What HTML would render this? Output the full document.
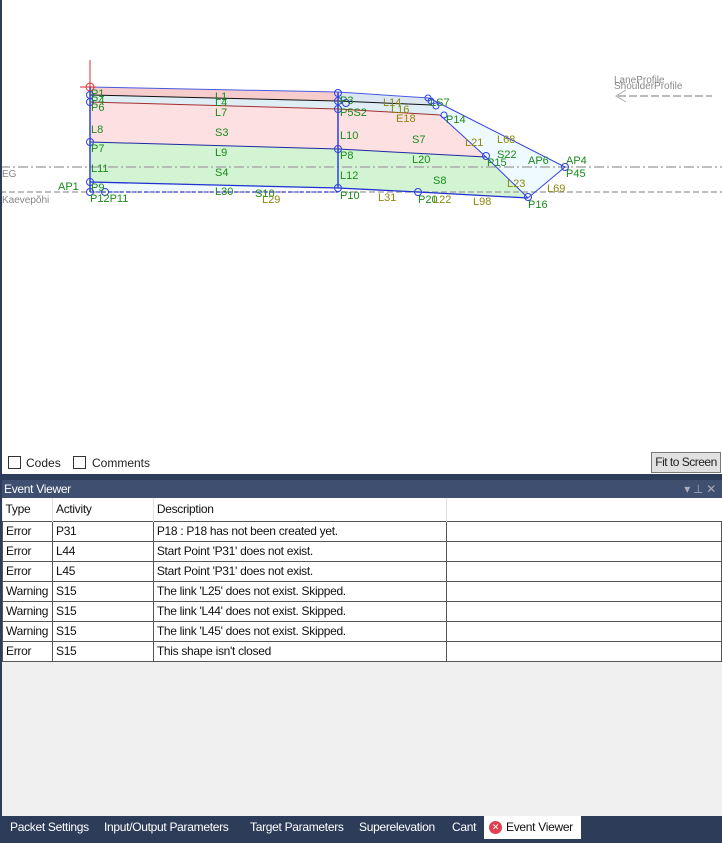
<!DOCTYPE html>
<html><head><meta charset="utf-8"><style>
*{margin:0;padding:0;box-sizing:border-box}
body{width:722px;height:843px;overflow:hidden;background:#2d3c58;font-family:"Liberation Sans",sans-serif;position:relative}
#canvas{position:absolute;left:2px;top:0;width:720px;height:452px;background:#fff}
#chk{position:absolute;left:2px;top:452px;width:720px;height:22px;background:#fff;font-size:12px;color:#222}
.cb{position:absolute;top:4px;width:13px;height:13px;border:1px solid #333;background:#fff}
#fit{position:absolute;right:1px;top:0px;width:70px;height:21px;border:1px solid #777;background:#e1e1e1;font-size:12px;line-height:19px;text-align:center;white-space:nowrap;letter-spacing:-0.5px;overflow:hidden}
#evh{position:absolute;left:2px;top:480px;width:720px;height:18px;background:#3e4f70;color:#fff;font-size:12px;line-height:18px;padding-left:2px;letter-spacing:-0.3px}
#tbl{position:absolute;left:2px;top:498px;width:720px;height:318px;background:#f0f0f0}
table{border-collapse:collapse;font-size:12px;color:#111;letter-spacing:-0.3px;table-layout:fixed}
td{height:20px;padding:0 3px;border:1px solid #555;background:#fff;white-space:nowrap;overflow:hidden}
tr.h td{border:none;border-right:1px solid #e0e0e0;background:#fff;height:23px}
#tabs{position:absolute;left:0;top:816px;width:722px;height:27px;font-size:12px;color:#fff;letter-spacing:-0.3px}
.t{position:absolute;top:4px}
</style></head><body>
<div id="canvas">
<svg width="720" height="452" viewBox="2 0 720 452" style="position:absolute;left:0;top:0">
<g font-family="Liberation Sans" font-size="11">
<polygon points="90,87 338,92 338,101 90,95" fill="#f6cccc"/>
<polygon points="338,92 429,98 432,105 338,101" fill="#dbe6f0"/>
<polygon points="90,95 338,101 432,105 440,115 338,109 90,102" fill="#dfeef4"/>
<polygon points="90,102 338,109 440,115 486,157 338,149 90,142" fill="#fde0e2"/>
<polygon points="90,142 338,149 486,157 528,198 418,192 338,188 90,182" fill="#d3f4d3"/>
<polygon points="429,98 440,115 486,157 528,198 565,167" fill="#eefafd"/>
<polygon points="90,182 338,188 90,192" fill="#eefafd"/>
<line x1="0" y1="167" x2="722" y2="167" stroke="#aaa" stroke-width="1.5" stroke-dasharray="10,3,2,3"/>
<line x1="0" y1="192" x2="722" y2="192" stroke="#aaa" stroke-width="1.5" stroke-dasharray="6,3"/>
<polyline points="90,87 338,92 429,98" fill="none" stroke="#4a5ae0"/>
<polyline points="90,95 338,101 432,105" fill="none" stroke="#111"/>
<polyline points="90,102 338,109 440,115" fill="none" stroke="#a03030"/>
<polyline points="90,142 338,149 486,157" fill="none" stroke="#1a2aa0"/>
<polyline points="90,182 338,188 418,192 528,198" fill="none" stroke="#2030d0" stroke-width="1.3"/>
<line x1="90" y1="192" x2="338" y2="192" stroke="#2030e0" stroke-dasharray="4,2"/>
<polyline points="440,115 486,157 528,198 565,167 429,98" fill="none" stroke="#3040e0"/>
<line x1="90" y1="86" x2="90" y2="192" stroke="#3040e0" stroke-width="1.5"/>
<line x1="338" y1="92" x2="338" y2="188" stroke="#3040e0" stroke-width="1.5"/>
<line x1="90" y1="60" x2="90" y2="87" stroke="#e03030"/>
<line x1="80" y1="87" x2="96" y2="87" stroke="#e03030"/>
<circle cx="90" cy="87" r="4" fill="none" stroke="#e03030"/>
<g fill="none" stroke="#3040e0">
<circle cx="90" cy="95" r="3.5"/><circle cx="90" cy="102" r="3.5"/><circle cx="90" cy="142" r="3.5"/><circle cx="90" cy="182" r="3.5"/><circle cx="90" cy="192" r="3.5"/><circle cx="105" cy="192" r="3.5"/>
<circle cx="338" cy="93" r="3.5"/><circle cx="338" cy="101" r="3.5"/><circle cx="338" cy="109" r="3.5"/><circle cx="346" cy="103" r="3.5"/><circle cx="338" cy="149" r="3.5"/><circle cx="338" cy="188" r="3.5"/>
<circle cx="428" cy="98" r="3"/><circle cx="431" cy="101" r="3"/><circle cx="436" cy="106" r="3"/><circle cx="444" cy="115" r="3"/><circle cx="486" cy="156" r="3.5"/><circle cx="418" cy="192" r="3.5"/><circle cx="528" cy="197" r="3.5"/><circle cx="565" cy="167" r="3.5"/>
</g>
<g fill="#1a8a1a">
<text x="91" y="97">P1</text><text x="91" y="104">P4</text><text x="91" y="111">P6</text><text x="91" y="133">L8</text><text x="91" y="152">P7</text><text x="91" y="172">L11</text><text x="91" y="191">P9</text><text x="90" y="202">P12P11</text><text x="58" y="190">AP1</text>
<text x="215" y="100">L1</text><text x="215" y="106">L4</text><text x="215" y="116">L7</text><text x="215" y="136">S3</text><text x="215" y="156">L9</text><text x="215" y="176">S4</text><text x="215" y="195">L30</text><text x="255" y="197">S10</text>
<text x="340" y="104">P3</text><text x="340" y="116">P5S2</text><text x="340" y="139">L10</text><text x="340" y="159">P8</text><text x="340" y="179">L12</text><text x="340" y="199">P10</text>
<text x="412" y="143">S7</text><text x="412" y="163">L20</text><text x="433" y="184">S8</text><text x="446" y="123">P14</text><text x="487" y="166">P15</text><text x="497" y="158">S22</text><text x="528" y="208">P16</text><text x="528" y="164">AP6</text><text x="566" y="164">AP4</text><text x="566" y="177">P45</text><text x="418" y="203">P20</text><text x="430" y="106">LS7</text>
</g>
<g fill="#8a8a10">
<text x="383" y="106">L14</text><text x="391" y="113">L16</text><text x="396" y="122">E18</text><text x="465" y="146">L21</text><text x="497" y="143">L68</text><text x="507" y="187">L23</text><text x="547" y="192">L69</text><text x="473" y="205">L98</text><text x="378" y="201">L31</text><text x="262" y="203">L29</text><text x="433" y="203">L22</text>
</g>
<g fill="#888" font-size="10"><text x="2" y="177">EG</text><text x="2" y="203">Kaevepõhi</text><text x="614" y="83">LaneProfile</text><text x="614" y="89">ShoulderProfile</text></g>
<line x1="618" y1="96" x2="712" y2="96" stroke="#bbb" stroke-width="2" stroke-dasharray="8,3"/>
<polyline points="626,90 616,96 626,102" fill="none" stroke="#aaa"/>
</g></svg>
</div>
<div id="chk"><div class="cb" style="left:6px"></div><span style="position:absolute;left:24px;top:4px">Codes</span><div class="cb" style="left:71px"></div><span style="position:absolute;left:90px;top:4px">Comments</span><div id="fit">Fit to Screen</div></div>
<div id="evh">Event Viewer<span style="position:absolute;right:6px;top:0;color:#aab">▾ ⊥ ✕</span></div>
<div id="tbl"><table>
<colgroup><col style="width:50px"><col style="width:101px"><col style="width:293px"><col style="width:276px"></colgroup>
<tr class="h"><td>Type</td><td>Activity</td><td>Description</td><td style="border-right:none"></td></tr>
<tr><td>Error</td><td>P31</td><td>P18 : P18 has not been created yet.</td><td></td></tr>
<tr><td>Error</td><td>L44</td><td>Start Point 'P31' does not exist.</td><td></td></tr>
<tr><td>Error</td><td>L45</td><td>Start Point 'P31' does not exist.</td><td></td></tr>
<tr><td>Warning</td><td>S15</td><td>The link 'L25' does not exist. Skipped.</td><td></td></tr>
<tr><td>Warning</td><td>S15</td><td>The link 'L44' does not exist. Skipped.</td><td></td></tr>
<tr><td>Warning</td><td>S15</td><td>The link 'L45' does not exist. Skipped.</td><td></td></tr>
<tr><td>Error</td><td>S15</td><td>This shape isn't closed</td><td></td></tr>
</table></div>
<div id="tabs">
<span class="t" style="left:10px">Packet Settings</span><span class="t" style="left:104px">Input/Output Parameters</span><span class="t" style="left:250px">Target Parameters</span><span class="t" style="left:359px">Superelevation</span><span class="t" style="left:452px">Cant</span>
<div style="position:absolute;left:484px;top:0;width:97px;height:23px;background:#fff;color:#111"><span style="position:absolute;left:5px;top:5px;width:13px;height:13px;border-radius:50%;background:#e04050;color:#fff;font-size:9px;line-height:13px;text-align:center">✕</span><span style="position:absolute;left:22px;top:4px">Event Viewer</span></div>
</div>
</body></html>
